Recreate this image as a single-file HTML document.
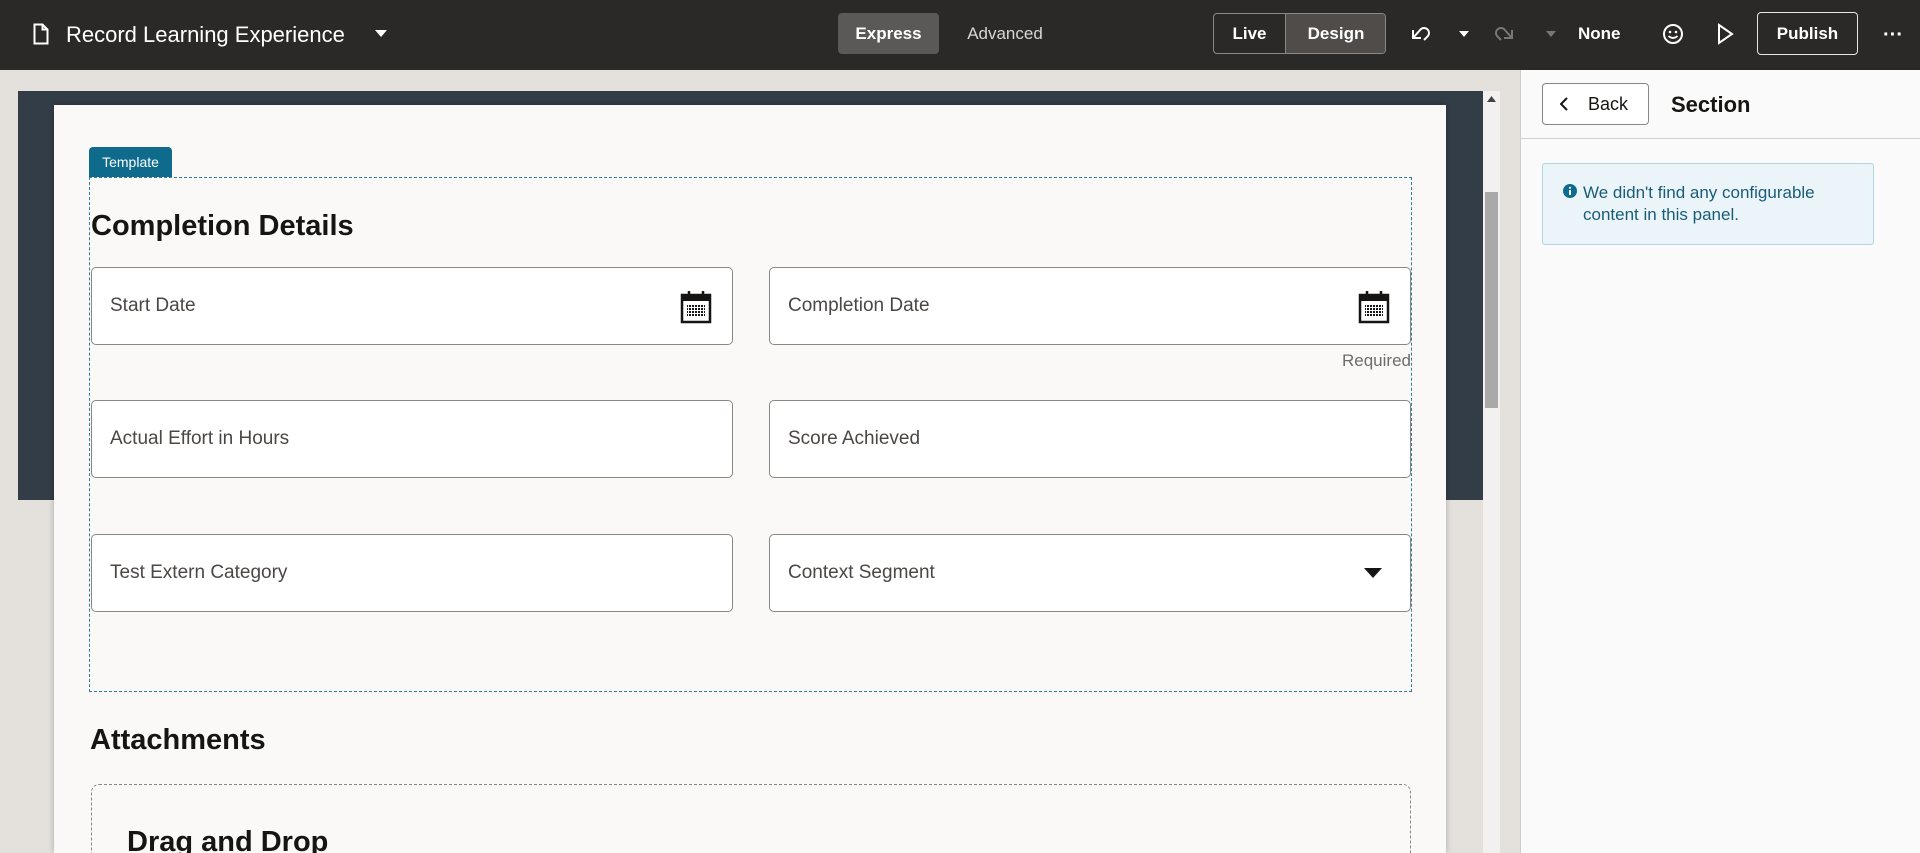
<!DOCTYPE html>
<html style="overflow:hidden;width:1920px;height:853px"><head><meta charset="utf-8"><style>
*{box-sizing:border-box;margin:0;padding:0}
body{width:1920px;height:853px;overflow:hidden;font-family:"Liberation Sans",sans-serif;background:#e4e1dd;position:relative}
.a{position:absolute}
.hdr{left:0;top:0;width:1920px;height:70px;background:#2a2927;color:#fff}
.hdr .t{font-size:22px}
.btn{border-radius:4px;font-size:17px;font-weight:bold;display:flex;align-items:center;justify-content:center}
.inp{background:#fff;border:1px solid #8a8783;border-radius:5px;height:78px;font-size:19px;color:#4a4745;padding-left:18px;display:flex;align-items:center}
.cal{position:absolute;right:20px;top:22px}
</style></head><body>
<div class="a hdr">
 <svg class="a" style="left:33px;top:23px" width="16" height="22" viewBox="0 0 16 22"><path d="M1.5 1.5h8l5 5v14h-13z M9.5 1.5v5h5" fill="none" stroke="#fff" stroke-width="2"/></svg>
 <div class="a t" style="left:66px;top:22px">Record Learning Experience</div>
 <svg class="a" style="left:375px;top:30px" width="12" height="8"><path d="M0 0h12L6 7z" fill="#fff"/></svg>
 <div class="a btn" style="left:838px;top:13px;width:101px;height:41px;background:#5b5957">Express</div>
 <div class="a btn" style="left:955px;top:13px;width:100px;height:41px;font-weight:normal;color:#d8d6d3">Advanced</div>
 <div class="a" style="left:1213px;top:13px;width:173px;height:41px;border:1px solid #8a8785;border-radius:4px;overflow:hidden">
  <div class="a btn" style="left:0;top:0;width:71px;height:39px">Live</div>
  <div class="a btn" style="left:71px;top:0;width:101px;height:39px;background:#4f4c49;border-left:1px solid #8a8785;border-radius:0">Design</div>
 </div>
 <svg class="a" style="left:1409px;top:24px" width="22" height="20" viewBox="0 0 22 20"><path d="M4 6v8h8 M4 14 L12 5 a5 5 0 0 1 7 7 l-4 4" fill="none" stroke="#fff" stroke-width="2"/></svg>
 <svg class="a" style="left:1459px;top:31px" width="10" height="6"><path d="M0 0h10L5 6z" fill="#fff"/></svg>
 <svg class="a" style="left:1494px;top:24px" width="22" height="20" viewBox="0 0 22 20"><path d="M18 6v8h-8 M18 14 L10 5 a5 5 0 0 0 -7 7 l4 4" fill="none" stroke="#777" stroke-width="2"/></svg>
 <svg class="a" style="left:1546px;top:31px" width="10" height="6"><path d="M0 0h10L5 6z" fill="#777"/></svg>
 <div class="a btn" style="left:1578px;top:13px;height:41px">None</div>
 <svg class="a" style="left:1662px;top:23px" width="22" height="22" viewBox="0 0 22 22"><circle cx="11" cy="11" r="9" fill="none" stroke="#fff" stroke-width="2"/><circle cx="8" cy="9" r="1.3" fill="#fff"/><circle cx="14" cy="9" r="1.3" fill="#fff"/><path d="M6.5 13q4.5 4 9 0" fill="none" stroke="#fff" stroke-width="1.8"/></svg>
 <svg class="a" style="left:1717px;top:23px" width="18" height="22"><path d="M2 2l13 9-13 9z" fill="none" stroke="#fff" stroke-width="2"/></svg>
 <div class="a btn" style="left:1757px;top:12px;width:101px;height:43px;border:1px solid #e8e6e3">Publish</div>
 <div class="a btn" style="left:1878px;top:15px;width:30px;height:41px;font-size:20px">···</div>
</div>
<div class="a" style="left:18px;top:91px;width:1465px;height:409px;background:#333d47"></div>
<div class="a" style="left:1483px;top:91px;width:17px;height:762px;background:#f2f1f0"></div>
<div class="a" style="left:1485px;top:192px;width:13px;height:216px;background:#a9a9a9"></div>
<svg class="a" style="left:1487px;top:96px" width="9" height="6"><path d="M0 6h9L4.5 0z" fill="#444"/></svg>
<div class="a" style="left:54px;top:105px;width:1392px;height:748px;background:#faf9f8;box-shadow:0 0 6px rgba(0,0,0,.25);overflow:hidden">
 <div class="a" style="left:37px;top:679px;width:1320px;height:120px;border:1px dashed #8a8783;border-radius:8px"></div>
 <div class="a" style="left:73px;top:721px;font-size:29px;line-height:33px;font-weight:bold;color:#161513">Drag and Drop</div>
</div>
<div class="a" style="left:89px;top:147px;width:83px;height:30px;background:#0f6b8c;color:#fff;font-size:14px;border-radius:4px 4px 0 0;display:flex;align-items:center;justify-content:center">Template</div>
<div class="a" style="left:89px;top:177px;width:1323px;height:515px;border:1px dashed #2f7ea0"></div>
<div class="a" style="left:91px;top:210px;font-size:29px;font-weight:bold;color:#161513">Completion Details</div>
<div class="a inp" style="left:91px;top:267px;width:642px">Start Date<svg class="cal" width="32" height="34" viewBox="0 0 32 34"><rect x="2" y="5" width="28" height="27" fill="#fff" stroke="#161513" stroke-width="2.5"/><rect x="2" y="5" width="28" height="6" fill="#161513"/><path d="M9 1v7M23 1v7" stroke="#161513" stroke-width="2.5"/><rect x="7" y="15" width="18" height="12" fill="url(#d)"/><defs><pattern id="d" width="3" height="3" patternUnits="userSpaceOnUse"><rect width="2" height="2" fill="#161513"/></pattern></defs></svg></div>
<div class="a inp" style="left:769px;top:267px;width:642px">Completion Date<svg class="cal" width="32" height="34" viewBox="0 0 32 34"><rect x="2" y="5" width="28" height="27" fill="#fff" stroke="#161513" stroke-width="2.5"/><rect x="2" y="5" width="28" height="6" fill="#161513"/><path d="M9 1v7M23 1v7" stroke="#161513" stroke-width="2.5"/><rect x="7" y="15" width="18" height="12" fill="url(#d)"/></svg></div>
<div class="a" style="left:1300px;top:351px;width:111px;text-align:right;font-size:17px;color:#6f6c69">Required</div>
<div class="a inp" style="left:91px;top:400px;width:642px">Actual Effort in Hours</div>
<div class="a inp" style="left:769px;top:400px;width:642px">Score Achieved</div>
<div class="a inp" style="left:91px;top:534px;width:642px">Test Extern Category</div>
<div class="a inp" style="left:769px;top:534px;width:642px">Context Segment<svg class="a" style="right:28px;top:33px" width="18" height="10"><path d="M0 0h18L9 10z" fill="#161513"/></svg></div>
<div class="a" style="left:90px;top:724px;font-size:29px;font-weight:bold;color:#161513">Attachments</div>
<div class="a" style="left:1520px;top:70px;width:400px;height:783px;background:#fafafa;border-left:1px solid #cfcdca"></div>
<div class="a" style="left:1520px;top:138px;width:400px;height:1px;background:#d4d2cf"></div>
<div class="a" style="left:1542px;top:83px;width:107px;height:42px;border:1px solid #8a8783;border-radius:4px;background:#fff;font-size:18px;color:#161513;display:flex;align-items:center;padding-left:45px">Back</div>
<svg class="a" style="left:1560px;top:97px" width="8" height="14"><path d="M7 1L1 7l6 6" fill="none" stroke="#161513" stroke-width="2"/></svg>
<div class="a" style="left:1671px;top:92px;font-size:22px;font-weight:bold;color:#161513">Section</div>
<div class="a" style="left:1542px;top:163px;width:332px;height:82px;background:#ebf5f9;border:1px solid #b3d6e4;border-radius:3px"></div>
<svg class="a" style="left:1563px;top:184px" width="14" height="14"><circle cx="7" cy="7" r="7" fill="#0f6b8c"/><rect x="6" y="6" width="2" height="5" fill="#fff"/><circle cx="7" cy="3.8" r="1.1" fill="#fff"/></svg>
<div class="a" style="left:1583px;top:182px;font-size:17px;line-height:22px;color:#1a5c78">We didn't find any configurable<br>content in this panel.</div>
</body></html>
